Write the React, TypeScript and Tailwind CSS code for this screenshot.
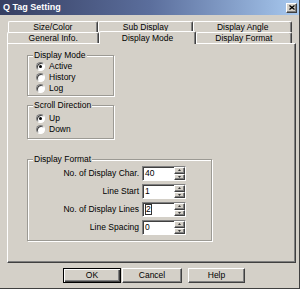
import React from 'react';

const raised =
  'border border-t-white border-l-white border-r-[#404040] border-b-[#404040] shadow-[inset_-1px_-1px_0_#808080]';

function Radio({ label, checked }: { label: string; checked?: boolean }) {
  return (
    <div className="flex h-[11px] items-center gap-[4px]">
      <span className="flex h-[9px] w-[9px] items-center justify-center rounded-full border border-t-[#808080] border-l-[#808080] border-r-white border-b-white bg-white shadow-[inset_1px_1px_0_#404040]">
        {checked && <span className="h-[3px] w-[3px] rounded-full bg-black" />}
      </span>
      <span className="leading-[11px]">{label}</span>
    </div>
  );
}

function Arrow({ up }: { up?: boolean }) {
  return (
    <svg width="3" height="2" viewBox="0 0 3 2">
      <path d={up ? 'M1.5 0 L3 2 L0 2 Z' : 'M0 0 L3 0 L1.5 2 Z'} fill="#333" />
    </svg>
  );
}

function SpinRow({ label, value, selected }: { label: string; value: string; selected?: boolean }) {
  return (
    <div className="flex h-[15px] items-center justify-end gap-[3px]">
      <span>{label}</span>
      <div className="flex h-[15px] w-[44px] border border-t-[#808080] border-l-[#808080] border-r-white border-b-white">
        <div className="flex flex-1 items-center bg-white pl-[2px] shadow-[inset_1px_1px_0_#404040]">
          {selected ? <span className="border border-[#333] leading-[9px]">{value}</span> : value}
        </div>
        <div className="flex w-[11px] flex-col bg-white shadow-[inset_0_1px_0_#404040]">
          <div className={`flex flex-1 items-center justify-center bg-[#d4d0c8] ${raised}`}>
            <Arrow up />
          </div>
          <div className={`flex flex-1 items-center justify-center bg-[#d4d0c8] ${raised}`}>
            <Arrow />
          </div>
        </div>
      </div>
    </div>
  );
}

const tab =
  'flex items-center justify-center rounded-t-[2px] border-l border-t border-r border-l-white border-t-white border-r-[#404040] shadow-[inset_-1px_0_0_#808080] leading-[10px]';

const group = 'border border-[#9c9a94] shadow-[1px_1px_0_#fff,inset_1px_1px_0_#fff]';
const legend = 'ml-[5px] bg-[#d4d0c8] px-[1px] leading-[10px]';

export default function App() {
  return (
    <div className="flex h-[289px] w-[300px] flex-col border-r border-b border-[#404040] bg-[#d4d0c8] font-['Liberation_Sans',Arial,sans-serif] text-[8.5px] text-black">
      <div className="flex h-[15px] items-center justify-between bg-linear-to-r from-[#363f62] via-[#5b6e9c] to-[#a8c9ef] pl-[3px] pr-[2px]">
        <span className="text-[9px] font-bold text-white">Q Tag Setting</span>
        <div className={`flex h-[10px] w-[11px] items-center justify-center bg-[#d4d0c8] ${raised}`}>
          <svg width="6" height="5" viewBox="0 0 6 5">
            <path d="M0.5 0.5 L5.5 4.5 M5.5 0.5 L0.5 4.5" stroke="#000" strokeWidth="1.3" />
          </svg>
        </div>
      </div>

      <div className="px-[7px]">
        <div className="mt-[6px] flex h-[11px] pl-[1px]">
          <div className={`${tab} w-[90px]`}>Size/Color</div>
          <div className={`${tab} w-[96px]`}>Sub Display</div>
          <div className={`${tab} w-[99px]`}>Display Angle</div>
        </div>
        <div className="flex h-[11px] items-end">
          <div className={`${tab} h-[11px] w-[93px]`}>General Info.</div>
          <div className={`${tab} relative z-10 -mb-[1px] h-[13px] w-[97px] bg-[#d4d0c8]`}>Display Mode</div>
          <div className={`${tab} h-[11px] w-[97px]`}>Display Format</div>
        </div>

        <div className="flex h-[220px] w-[289px] flex-col items-start border border-t-white border-l-white border-r-[#404040] border-b-[#404040] pl-[19px] pt-[6px] shadow-[inset_-1px_-1px_0_#808080]">
          <fieldset className={`w-[87px] ${group}`}>
            <legend className={legend}>Display Mode</legend>
            <div className="pl-[8px] pt-[1px] pb-[1px]">
              <Radio label="Active" checked />
              <Radio label="History" />
              <Radio label="Log" />
            </div>
          </fieldset>

          <fieldset className={`mt-[4px] w-[87px] ${group}`}>
            <legend className={legend}>Scroll Direction</legend>
            <div className="pl-[8px] pt-[3px] pb-[3px]">
              <Radio label="Up" checked />
              <Radio label="Down" />
            </div>
          </fieldset>

          <fieldset className={`mt-[15px] w-[185px] ${group}`}>
            <legend className={legend}>Display Format</legend>
            <div className="flex flex-col gap-[3px] pr-[25px] pt-[2px] pb-[5px]">
              <SpinRow label="No. of Display Char." value="40" />
              <SpinRow label="Line Start" value="1" />
              <SpinRow label="No. of Display Lines" value="2" selected />
              <SpinRow label="Line Spacing" value="0" />
            </div>
          </fieldset>
        </div>
      </div>

      <div className="mt-[5px] flex h-[15px] pl-[63px]">
        <button className="flex w-[58px] items-center justify-center border border-black shadow-[inset_1px_1px_0_#fff,inset_-1px_-1px_0_#404040,inset_-2px_-2px_0_#808080]">
          OK
        </button>
        <button className={`ml-[1px] flex w-[60px] items-center justify-center ${raised}`}>Cancel</button>
        <button className={`ml-[6px] flex w-[57px] items-center justify-center ${raised}`}>Help</button>
      </div>
    </div>
  );
}
